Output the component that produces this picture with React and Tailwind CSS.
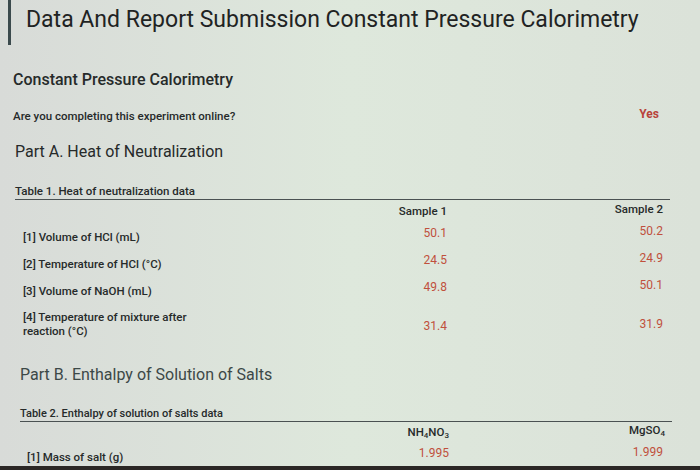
const table1 = [
  { label: ['[1] Volume of HCl (mL)'], s1: '50.1', s2: '50.2' },
  { label: ['[2] Temperature of HCl (°C)'], s1: '24.5', s2: '24.9' },
  { label: ['[3] Volume of NaOH (mL)'], s1: '49.8', s2: '50.1' },
  { label: ['[4] Temperature of mixture after', 'reaction (°C)'], s1: '31.4', s2: '31.9', tall: true },
];

export default function App() {
  return (
    <div
      className="w-[700px] h-[470px] overflow-hidden flex flex-col bg-linear-to-r from-[#d8dbd8] via-[#dee8dc] to-[#dbe2d9] text-[#262a2a]"
      style={{ fontFamily: 'Roboto, "Noto Sans", sans-serif' }}
    >
      {/* Page title */}
      <div className="flex h-[46px] pl-[8px]">
        <div className="w-[3px] h-[45px] bg-[#3b4a4d]" />
        <h1 className="pl-[15px] pt-[6px] text-[23px] leading-[28px] text-[#1f2323]">
          Data And Report Submission Constant Pressure Calorimetry
        </h1>
      </div>

      {/* Section heading */}
      <h2 className="pl-[13px] mt-[25px] text-[16px] leading-[20px] font-medium">
        Constant Pressure Calorimetry
      </h2>

      <div className="flex items-center justify-between pl-[13px] pr-[41px] mt-[18px] h-[18px]">
        <span className="text-[11.5px] font-medium">Are you completing this experiment online?</span>
        <span className="text-[12px] font-bold text-[#b8423a] -mt-[6px]">Yes</span>
      </div>

      <h3 className="pl-[15px] mt-[16px] text-[16px] leading-[22px]">Part A. Heat of Neutralization</h3>

      {/* Table 1 */}
      <div className="ml-[15px] mr-[30px] mt-[21px]">
        <div className="text-[11.5px] leading-[14px] font-medium pb-[1px] border-b border-[#4a5152]">
          Table 1. Heat of neutralization data
        </div>
        <div className="grid grid-cols-[352px_80px_216px]">
          <div className="h-[23px]" />
          <div className="h-[23px] flex items-center justify-end text-[11.5px] font-medium">Sample 1</div>
          <div className="h-[23px] flex items-start justify-end pt-[1px] text-[11.5px] font-medium">Sample 2</div>
          {table1.map((r) => (
            <Row key={r.label[0]} {...r} />
          ))}
        </div>
      </div>

      <h3 className="pl-[20px] mt-[20px] text-[16px] leading-[22px] text-[#3c4847]">
        Part B. Enthalpy of Solution of Salts
      </h3>

      {/* Table 2 */}
      <div className="ml-[20px] mr-[28px] mt-[21px]">
        <div className="text-[11px] leading-[14px] font-medium border-b border-[#4a5152]">
          Table 2. Enthalpy of solution of salts data
        </div>
        <div className="grid grid-cols-[349px_80px_223px]">
          <div className="h-[21px]" />
          <div className="h-[21px] flex items-center justify-end text-[11.5px] font-medium">
            <span>
              NH<sub className="text-[8px]">4</sub>NO<sub className="text-[8px]">3</sub>
            </span>
          </div>
          <div className="h-[21px] flex items-start justify-end pr-[7px] text-[11.5px] font-medium">
            <span>
              MgSO<sub className="text-[8px]">4</sub>
            </span>
          </div>
          <div className="h-[23px] flex items-end pl-[7px] text-[11.5px] font-medium">[1] Mass of salt (g)</div>
          <div className="h-[23px] flex items-start justify-end pt-[1px] text-[12px] text-[#c0503c]">1.995</div>
          <div className="h-[23px] flex items-start justify-end pr-[9px] text-[12px] text-[#c0503c]">1.999</div>
        </div>
      </div>

      <div className="mt-auto h-[4px] shrink-0 bg-[#2b2725]" />
    </div>
  );
}

function Row({ label, s1, s2, tall }) {
  const h = tall ? 'h-[40px]' : 'h-[27px]';
  return (
    <>
      <div className={`${h} flex flex-col justify-center pl-[8px] text-[11.5px] leading-[14px] font-medium`}>
        {label.map((l) => (
          <span key={l}>{l}</span>
        ))}
      </div>
      <div className={`${h} flex items-center justify-end ${tall ? 'pt-[4px]' : 'pb-[8px]'} text-[12px] text-[#c0503c]`}>
        {s1}
      </div>
      <div className={`${h} flex items-center justify-end ${tall ? 'pb-[0px]' : 'pb-[12px]'} text-[12px] text-[#c0503c]`}>
        {s2}
      </div>
    </>
  );
}
